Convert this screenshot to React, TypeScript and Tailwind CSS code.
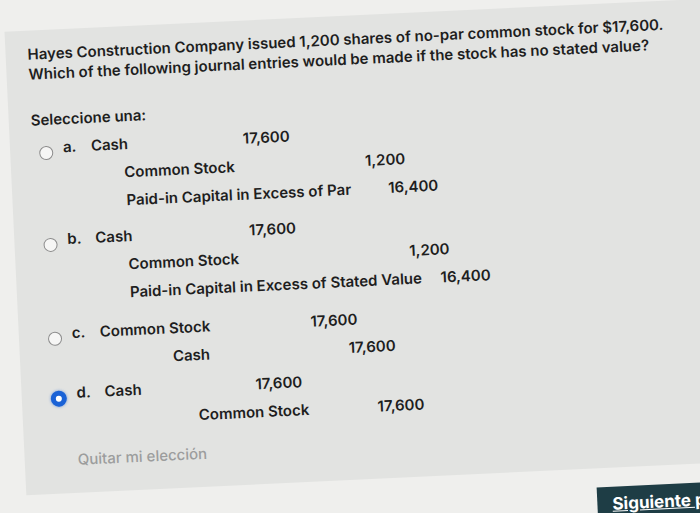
import React from 'react';

type Line = { cls: string; label: string; amt: string };
type Option = { letter: string; selected?: boolean; gap: string; lines: Line[] };

const options: Option[] = [
  {
    letter: 'a.',
    gap: 'mt-[4px]',
    lines: [
      { cls: 'w-[152px]', label: 'Cash', amt: '17,600' },
      { cls: 'pl-[32px] w-[273px]', label: 'Common Stock', amt: '1,200' },
      { cls: 'pl-[33px] w-[295px]', label: 'Paid-in Capital in Excess of Par', amt: '16,400' },
    ],
  },
  {
    letter: 'b.',
    gap: 'mt-[8px]',
    lines: [
      { cls: 'w-[154px]', label: 'Cash', amt: '17,600' },
      { cls: 'pl-[32px] w-[313px]', label: 'Common Stock', amt: '1,200' },
      { cls: 'pl-[32px] w-[343px]', label: 'Paid-in Capital in Excess of Stated Value', amt: '16,400' },
    ],
  },
  {
    letter: 'c.',
    gap: 'mt-[10px]',
    lines: [
      { cls: 'w-[211px]', label: 'Common Stock', amt: '17,600' },
      { cls: 'pl-[72px] w-[248px]', label: 'Cash', amt: '17,600' },
    ],
  },
  {
    letter: 'd.',
    selected: true,
    gap: 'mt-[4px]',
    lines: [
      { cls: 'w-[151px]', label: 'Cash', amt: '17,600' },
      { cls: 'pl-[93px] w-[272px]', label: 'Common Stock', amt: '17,600' },
    ],
  },
];

function Radio({ selected }: { selected?: boolean }) {
  if (selected) {
    return (
      <span className="mt-[11px] block h-[16px] w-[16px] shrink-0 rounded-full border-[5px] border-[#1a62d6] bg-white shadow-[0_0_3px_rgba(26,98,214,0.6)]" />
    );
  }
  return (
    <span className="mt-[12px] block h-[14px] w-[14px] shrink-0 rounded-full border-[1.5px] border-[#8c8c8c] bg-[#f6f6f5]" />
  );
}

function Answer({ option }: { option: Option }) {
  return (
    <div className={`flex items-start ${option.gap}`}>
      <Radio selected={option.selected} />
      <span className="ml-[10px] flex h-[28px] w-[28px] items-center">{option.letter}</span>
      <div className="flex flex-col">
        {option.lines.map((line, i) => (
          <div key={i} className="flex h-[28px] items-center whitespace-nowrap">
            <span className={`block ${line.cls}`}>{line.label}</span>
            <span>{line.amt}</span>
          </div>
        ))}
      </div>
    </div>
  );
}

export default function App() {
  return (
    <div className="h-[513px] w-[700px] overflow-hidden bg-[#efefed] [font-family:Inter,'Liberation_Sans',sans-serif]">
      <div className="h-[600px] w-[800px] origin-top-left -rotate-[2.7deg] pl-[3px] pt-[32px]">
        {/* question panel */}
        <div className="h-[464px] bg-[#e2e3e1] pl-[22px] pt-[14px] text-[15px] font-semibold leading-[20px] text-[#1e1e1e]">
          <p>
            Hayes Construction Company issued 1,200 shares of no-par common stock for $17,600.
            <br />
            Which of the following journal entries would be made if the stock has no stated value?
          </p>
          <p className="mt-[26px]">Seleccione una:</p>

          <div className="ml-[7px]">
            {options.map((o) => (
              <Answer key={o.letter} option={o} />
            ))}
            <p className="ml-[24px] mt-[15px] font-medium text-[#9c9d9d]">Quitar mi elección</p>
          </div>
        </div>

        {/* next page button */}
        <div className="ml-[570px] mt-[19px] h-[46px] w-[200px] bg-[#1e3d45] pl-[15px] pt-[7px] text-[17px] font-bold leading-[20px] text-white underline">
          Siguiente página
        </div>
      </div>
    </div>
  );
}
